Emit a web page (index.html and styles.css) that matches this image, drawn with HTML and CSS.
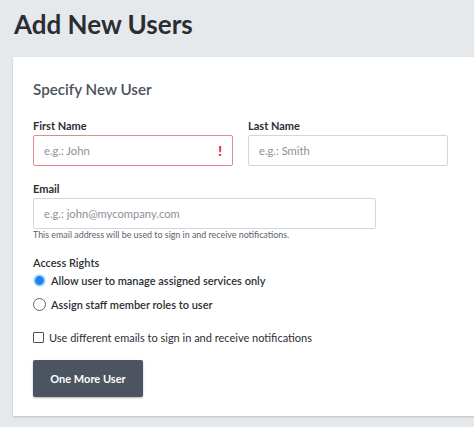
FILE: index.html
```html
<!DOCTYPE html>
<html lang="en">
<head>
<meta charset="utf-8">
<title>Add New Users</title>
<link rel="stylesheet" href="styles.css">
</head>
<body>
<h1 class="page-title">Add New Users</h1>
<div class="card">
  <h2 class="card-title">Specify New User</h2>
  <div class="name-row">
    <div class="field">
      <label class="label">First Name</label>
      <div class="input input-error">
        <span class="placeholder">e.g.: John</span>
        <span class="error-mark">!</span>
      </div>
    </div>
    <div class="field">
      <label class="label">Last Name</label>
      <div class="input">
        <span class="placeholder">e.g.: Smith</span>
      </div>
    </div>
  </div>
  <div class="field email-field">
    <label class="label">Email</label>
    <div class="input input-wide">
      <span class="placeholder">e.g.: john@mycompany.com</span>
    </div>
    <div class="hint">This email address will be used to sign in and receive notifications.</div>
  </div>
  <div class="access">
    <div class="access-label">Access Rights</div>
    <div class="option">
      <span class="radio radio-on"></span>
      <span class="option-text">Allow user to manage assigned services only</span>
    </div>
    <div class="option">
      <span class="radio"></span>
      <span class="option-text">Assign staff member roles to user</span>
    </div>
  </div>
  <div class="check-row">
    <span class="checkbox"></span>
    <span class="check-text">Use different emails to sign in and receive notifications</span>
  </div>
  <button class="btn">One More User</button>
</div>
</body>
</html>
```
FILE: styles.css
```css
* { box-sizing: border-box; }
html, body { margin: 0; padding: 0; }
body {
  background: #e6e9ec;
  font-family: Lato, "Open Sans", sans-serif;
  color: #2b2f36;
  width: 474px;
  height: 427px;
  overflow: hidden;
}
.page-title {
  margin: 0;
  padding: 8px 0 0 14px;
  height: 57px;
  font-size: 26px;
  font-weight: 700;
  color: #2a2d32;
  line-height: 32px;
}
.card {
  margin-left: 13px;
  margin-right: -20px;
  background: #fff;
  padding: 22px 20px 19px 20px;
  box-shadow: 0 1px 2px rgba(0,0,0,0.18);
}
.card-title {
  margin: 0 0 20px 0;
  font-size: 15.2px;
  font-weight: 600;
  color: #4a515c;
  line-height: 20px;
}
.name-row {
  display: flex;
  gap: 15px;
}
.field {
  display: flex;
  flex-direction: column;
}
.label {
  font-size: 11px;
  font-weight: 700;
  color: #2b2f36;
  line-height: 14px;
  margin-bottom: 2px;
}
.input {
  width: 200px;
  height: 31px;
  border: 1px solid #d3d6da;
  border-radius: 2px;
  display: flex;
  align-items: center;
  justify-content: space-between;
  padding: 0 10px 0 10px;
  background: #fff;
}
.input-error { border-color: #e58a8f; }
.input-wide { width: 343px; }
.placeholder {
  font-size: 11.2px;
  color: #8c9198;
}
.error-mark {
  font-size: 13px;
  font-weight: 900;
  color: #e0202b;
}
.email-field { margin-top: 16px; }
.hint {
  font-size: 8.9px;
  color: #5c626b;
  margin-top: 0;
  line-height: 12px;
}
.access {
  margin-top: 15px;
  display: flex;
  flex-direction: column;
  gap: 4px;
}
.access-label {
  font-size: 11px;
  font-weight: 600;
  color: #2b2f36;
  line-height: 14px;
  margin-bottom: -4px;
}
.option {
  display: flex;
  align-items: center;
  gap: 5px;
  height: 20px;
}
.radio {
  width: 13px;
  height: 13px;
  border-radius: 50%;
  border: 1px solid #5f656d;
  background: #fff;
  flex: none;
}
.radio-on {
  border: 2px solid #bcdcf9;
  background: #1a86e8;
  box-shadow: 0 0 0 1px #1a86e8 inset;
}
.option-text {
  font-size: 11px;
  font-weight: 600;
  color: #2b2f36;
}
.check-row {
  display: flex;
  align-items: center;
  gap: 5px;
  height: 14px;
  margin-top: 16px;
}
.checkbox {
  width: 11px;
  height: 11px;
  border: 1px solid #4c5159;
  border-radius: 1px;
  flex: none;
}
.check-text {
  font-size: 11px;
  color: #2b2f36;
}
.btn {
  display: block;
  margin-top: 16px;
  width: 110px;
  height: 37px;
  border: none;
  border-radius: 2px;
  background: #4b5460;
  color: #fff;
  font-family: Lato, "Open Sans", sans-serif;
  font-size: 11px;
  font-weight: 700;
  box-shadow: 0 1px 2px rgba(0,0,0,0.3);
  padding: 0;
}
```
